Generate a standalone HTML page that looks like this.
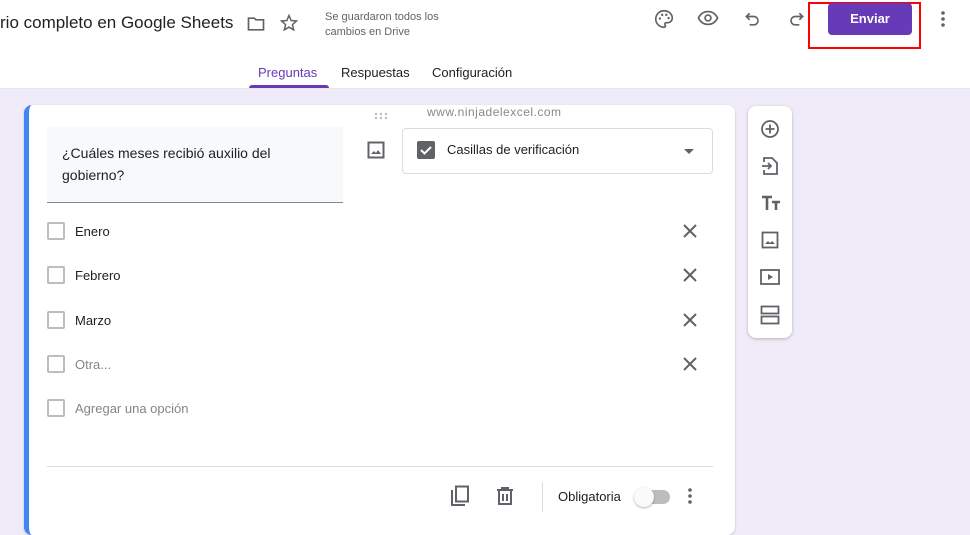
<!DOCTYPE html><html><head><style>
*{box-sizing:border-box;margin:0;padding:0}
body{width:970px;height:524px;overflow:hidden;background:#f0ebf8;font-family:"Liberation Sans",Arial,sans-serif;color:#202124;position:relative}
.hdr{position:absolute;left:0;top:0;width:970px;height:89px;background:#fff;border-bottom:1px solid #e6e6e6}
.a{position:absolute}
.tab{position:absolute;top:65px;font-size:13px;color:#202124}
.card{position:absolute;left:24px;top:105px;width:711px;height:430px;background:#fff;border-radius:8px;border-left:5px solid #4285f4;box-shadow:0 1px 2px rgba(0,0,0,.2)}
.opt{position:absolute;left:48px;font-size:13px;color:#202124}
.cb{position:absolute;left:47px;width:18px;height:18px;border:2px solid #bdbdbd;border-radius:2px}
.x{position:absolute;left:682px;width:16px;height:16px}
.side{position:absolute;left:748px;top:106px;width:44px;height:232px;background:#fff;border-radius:8px;box-shadow:0 1px 3px rgba(0,0,0,.25)}
svg{position:absolute}
</style></head><body>
<div class="hdr">
<div class="a" style="left:0;top:13px;font-size:17px;color:#202124">rio completo en Google Sheets</div>
<svg style="left:246px;top:14px" width="20" height="20" viewBox="0 0 24 24"><path d="M3 5h7l2 2h9v12H3z" fill="none" stroke="#5f6368" stroke-width="2"/></svg>
<svg style="left:279px;top:13px" width="20" height="20" viewBox="0 0 24 24"><path d="M12 3l2.6 6 6.4.6-4.9 4.3 1.5 6.3L12 17l-5.6 3.2 1.5-6.3L3 9.6 9.4 9z" fill="none" stroke="#5f6368" stroke-width="1.8"/></svg>
<div class="a" style="left:325px;top:10px;font-size:11px;color:#5f6368;line-height:15px">Se guardaron todos los<br>cambios en Drive</div>
<svg style="left:653px;top:8px" width="22" height="22" viewBox="0 0 24 24"><path d="M12 3a9 9 0 000 18c1 0 1.5-.7 1.5-1.5 0-.8-.6-1.2-.6-2 0-.8.7-1.5 1.5-1.5H16a5 5 0 005-5c0-4.4-4-8-9-8z" fill="none" stroke="#5f6368" stroke-width="1.8"/><circle cx="7.5" cy="11.5" r="1.3" fill="#5f6368"/><circle cx="10" cy="7.5" r="1.3" fill="#5f6368"/><circle cx="14.5" cy="7.5" r="1.3" fill="#5f6368"/><circle cx="17" cy="11" r="1.3" fill="#5f6368"/></svg>
<svg style="left:697px;top:7px" width="22" height="22" viewBox="0 0 24 24"><path d="M1.5 12C4 7 8 5 12 5s8 2 10.5 7C20 17 16 19 12 19S4 17 1.5 12z" fill="none" stroke="#5f6368" stroke-width="1.8"/><circle cx="12" cy="12" r="3.2" fill="none" stroke="#5f6368" stroke-width="1.8"/></svg>
<svg style="left:743px;top:9px" width="20" height="20" viewBox="0 0 24 24"><path d="M8 5L4 9l4 4M4 9h9a5 5 0 010 10H8" fill="none" stroke="#5f6368" stroke-width="2"/></svg>
<svg style="left:786px;top:9px" width="20" height="20" viewBox="0 0 24 24"><path d="M16 5l4 4-4 4M20 9h-9a5 5 0 000 10h5" fill="none" stroke="#5f6368" stroke-width="2"/></svg>
<div class="a" style="left:808px;top:2px;width:113px;height:47px;border:2px solid #f00"></div>
<div class="a" style="left:828px;top:3px;width:84px;height:32px;background:#673ab7;border-radius:4px;color:#fff;font-size:13px;font-weight:bold;text-align:center;line-height:32px">Enviar</div>
<svg style="left:934px;top:9px" width="18" height="20" viewBox="0 0 18 20"><circle cx="9" cy="4" r="1.8" fill="#5f6368"/><circle cx="9" cy="10" r="1.8" fill="#5f6368"/><circle cx="9" cy="16" r="1.8" fill="#5f6368"/></svg>
<div class="tab" style="left:258px;color:#673ab7">Preguntas</div>
<div class="tab" style="left:341px">Respuestas</div>
<div class="tab" style="left:432px">Configuración</div>
<div class="a" style="left:249px;top:85px;width:80px;height:3px;background:#673ab7;border-radius:3px 3px 0 0"></div>
</div>
<div class="card">
<svg style="left:345px;top:7px" width="14" height="8" viewBox="0 0 14 8"><g fill="#bbb"><circle cx="2" cy="2" r="1.2"/><circle cx="7" cy="2" r="1.2"/><circle cx="12" cy="2" r="1.2"/><circle cx="2" cy="6" r="1.2"/><circle cx="7" cy="6" r="1.2"/><circle cx="12" cy="6" r="1.2"/></g></svg>
<div class="a" style="left:398px;top:0px;font-size:12px;color:#888;letter-spacing:.5px">www.ninjadelexcel.com</div>
<div class="a" style="left:18px;top:22px;width:296px;height:76px;background:#f8f9fa;border-bottom:1px solid #80868b"></div>
<div class="a" style="left:33px;top:37px;font-size:14px;line-height:22px;color:#202124">¿Cuáles meses recibió auxilio del<br>gobierno?</div>
<svg style="left:338px;top:36px" width="18" height="18" viewBox="0 0 18 18"><rect x="1.5" y="1.5" width="15" height="15" fill="none" stroke="#5f6368" stroke-width="2"/><path d="M4 13l3-3 2 2 2-3 3 4z" fill="#5f6368"/></svg>
<div class="a" style="left:373px;top:23px;width:311px;height:46px;border:1px solid #dadce0;border-radius:4px"></div>
<div class="a" style="left:388px;top:36px;width:18px;height:18px;background:#5f6368;border-radius:2px"></div>
<svg style="left:388px;top:36px" width="18" height="18" viewBox="0 0 18 18"><path d="M4 9l3.5 3.5L14 6" fill="none" stroke="#fff" stroke-width="2"/></svg>
<div class="a" style="left:418px;top:37px;font-size:13px;color:#202124">Casillas de verificación</div>
<div class="a" style="left:655px;top:44px;border-left:5px solid transparent;border-right:5px solid transparent;border-top:5px solid #5f6368"></div>
</div>
<div class="cb" style="top:222px"></div><div class="opt" style="left:75px;top:224px">Enero</div>
<div class="cb" style="top:266px"></div><div class="opt" style="left:75px;top:268px">Febrero</div>
<div class="cb" style="top:311px"></div><div class="opt" style="left:75px;top:313px">Marzo</div>
<div class="cb" style="top:355px"></div><div class="opt" style="left:75px;top:357px;color:#80868b">Otra...</div>
<div class="cb" style="top:399px"></div><div class="opt" style="left:75px;top:401px;color:#80868b">Agregar una opción</div>
<svg class="x" style="top:223px" viewBox="0 0 16 16"><path d="M2 2l12 12M14 2L2 14" stroke="#5f6368" stroke-width="2"/></svg>
<svg class="x" style="top:267px" viewBox="0 0 16 16"><path d="M2 2l12 12M14 2L2 14" stroke="#5f6368" stroke-width="2"/></svg>
<svg class="x" style="top:312px" viewBox="0 0 16 16"><path d="M2 2l12 12M14 2L2 14" stroke="#5f6368" stroke-width="2"/></svg>
<svg class="x" style="top:356px" viewBox="0 0 16 16"><path d="M2 2l12 12M14 2L2 14" stroke="#5f6368" stroke-width="2"/></svg>
<div class="a" style="left:47px;top:466px;width:666px;height:1px;background:#dadce0"></div>
<svg style="left:450px;top:485px" width="20" height="22" viewBox="0 0 20 22"><path d="M2 5v15h13" fill="none" stroke="#5f6368" stroke-width="2"/><rect x="6" y="1.5" width="12" height="15" fill="none" stroke="#5f6368" stroke-width="2"/></svg>
<svg style="left:496px;top:486px" width="18" height="20" viewBox="0 0 18 20"><path d="M1 4h16M6 4V2h6v2M3 4v14h12V4M7 8v7M11 8v7" fill="none" stroke="#5f6368" stroke-width="2"/></svg>
<div class="a" style="left:542px;top:482px;width:1px;height:30px;background:#dadce0"></div>
<div class="a" style="left:558px;top:489px;font-size:13px;color:#202124">Obligatoria</div>
<div class="a" style="left:638px;top:490px;width:32px;height:14px;background:#bdbdbd;border-radius:7px"></div>
<div class="a" style="left:634px;top:487px;width:20px;height:20px;background:#fafafa;border-radius:50%;box-shadow:0 1px 2px rgba(0,0,0,.3)"></div>
<svg style="left:682px;top:487px" width="16" height="20" viewBox="0 0 16 20"><circle cx="8" cy="3" r="1.8" fill="#5f6368"/><circle cx="8" cy="9" r="1.8" fill="#5f6368"/><circle cx="8" cy="15" r="1.8" fill="#5f6368"/></svg>
<div class="side">
<svg style="left:12px;top:13px" width="20" height="20" viewBox="0 0 20 20"><circle cx="10" cy="10" r="8" fill="none" stroke="#5f6368" stroke-width="1.8"/><path d="M10 5.5v9M5.5 10h9" stroke="#5f6368" stroke-width="1.8"/></svg>
<svg style="left:13px;top:50px" width="18" height="20" viewBox="0 0 18 20"><path d="M3 6V2h8l5 5v11H3v-4" fill="none" stroke="#5f6368" stroke-width="1.8"/><path d="M1 10h9M7 7l3 3-3 3" fill="none" stroke="#5f6368" stroke-width="1.8"/></svg>
<svg style="left:13px;top:89px" width="20" height="16" viewBox="0 0 20 16"><path d="M1 2h10M6 2v13M11 7h8M15 7v8" stroke="#5f6368" stroke-width="2.6"/></svg>
<svg style="left:13px;top:125px" width="18" height="18" viewBox="0 0 18 18"><rect x="1.5" y="1.5" width="15" height="15" fill="none" stroke="#5f6368" stroke-width="1.8"/><path d="M4 13l3-3 2 2 2-2 3 3z" fill="#5f6368"/></svg>
<svg style="left:12px;top:163px" width="20" height="16" viewBox="0 0 20 16"><rect x="1" y="1" width="18" height="14" fill="none" stroke="#5f6368" stroke-width="1.8"/><path d="M8 5v6l5-3z" fill="#5f6368"/></svg>
<svg style="left:12px;top:199px" width="20" height="20" viewBox="0 0 20 20"><rect x="1.5" y="1.5" width="17" height="7" fill="none" stroke="#5f6368" stroke-width="1.8"/><rect x="1.5" y="11.5" width="17" height="7" fill="none" stroke="#5f6368" stroke-width="1.8"/></svg>
</div>
</body></html>
